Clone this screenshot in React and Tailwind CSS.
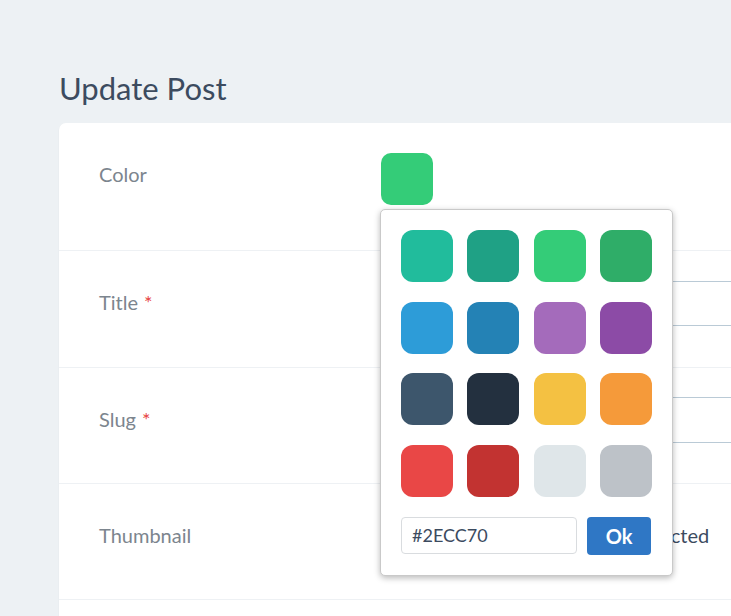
import React from 'react';

const palette = [
  '#21bc9c', '#1fa185', '#34cc78', '#2fad68',
  '#2d9cd8', '#2482b5', '#a46bbb', '#8c4ba6',
  '#3d566c', '#23303f', '#f4c142', '#f59a3a',
  '#e94746', '#c23331', '#dfe6e9', '#bdc2c8',
];

const Label = ({ children, required }) => (
  <div className="w-[322px] shrink-0 pl-[40px] pt-[39px]">
    <span className="text-[20px] leading-[24px] text-[#7c858e]">
      {children}
      {required && <span className="ml-[6px] text-[#e74444]">*</span>}
    </span>
  </div>
);

const ColorPopover = () => (
  <div className="absolute left-[-1px] top-[86px] z-10 w-[293px] rounded-[5px] border border-[#c9c9c9] bg-white py-[20px] pl-[20px] pr-[20px] shadow-[0_2px_6px_rgba(0,0,0,0.28)]">
    <div className="grid grid-cols-[repeat(4,52px)] justify-between gap-y-[19.5px]">
      {palette.map((c) => (
        <div key={c} className="h-[52px] w-[52px] rounded-[12px]" style={{ backgroundColor: c }} />
      ))}
    </div>
    <div className="mt-[20px] flex items-center gap-[10px] pr-[1px]">
      <div className="flex h-[37px] flex-1 items-center rounded-[4px] border border-[#d9dcdf] px-[10px] text-[18px] text-[#3c4b5f]">
        #2ECC70
      </div>
      <button className="h-[38px] w-[64px] rounded-[4px] bg-[#2f77c5] text-[20px] font-bold text-white">Ok</button>
    </div>
  </div>
);

export default function App() {
  return (
    <div className="h-[616px] w-[731px] overflow-hidden bg-[#edf1f4] font-[Lato,sans-serif]">
      <div className="pl-[59px] pt-[70px]">
        <h1 className="mb-[17px] text-[31px] leading-[36px] font-normal text-[#3c4b5f]">Update Post</h1>

        <div className="w-[800px] rounded-[7px] bg-white shadow-[0_1px_2px_rgba(0,0,0,0.05)]">
          <div className="flex h-[128px] border-b border-[#eef1f4]">
            <Label>Color</Label>
            <div className="relative flex-1 pt-[30px]">
              <div className="h-[52px] w-[52px] rounded-[10px] bg-[#34cc78]" />
              <ColorPopover />
            </div>
          </div>

          <div className="flex h-[117px] border-b border-[#eef1f4]">
            <Label required>Title</Label>
            <div className="flex-1 pt-[30px] pr-[40px]">
              <div className="h-[45px] w-full rounded-[5px] border border-[#bacad6] bg-white" />
            </div>
          </div>

          <div className="flex h-[116px] border-b border-[#eef1f4]">
            <Label required>Slug</Label>
            <div className="flex-1 pt-[29px] pr-[40px]">
              <div className="h-[46px] w-full rounded-[5px] border border-[#bacad6] bg-white" />
            </div>
          </div>

          <div className="flex h-[116px] border-b border-[#eef1f4]">
            <Label>Thumbnail</Label>
            <div className="flex flex-1 items-start pt-[39px]">
              <div className="w-[192px] shrink-0" />
              <span className="text-[20px] leading-[24px] text-[#3c4b5f]">No file selected</span>
            </div>
          </div>

          <div className="h-[60px]" />
        </div>
      </div>
    </div>
  );
}
